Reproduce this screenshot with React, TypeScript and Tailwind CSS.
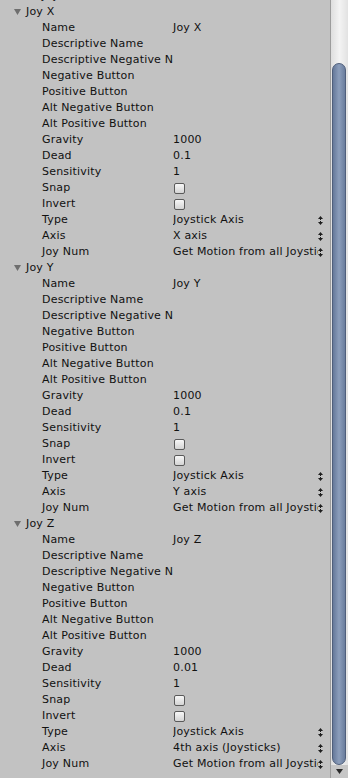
import React from "react"

type Field =
    | { label: string; kind: "text"; value?: string }
    | { label: string; kind: "check" }
    | { label: string; kind: "select"; value: string }

const axisFields = (name: string, dead: string, axis: string): Field[] => [
    { label: "Name", kind: "text", value: name },
    { label: "Descriptive Name", kind: "text" },
    { label: "Descriptive Negative N", kind: "text" },
    { label: "Negative Button", kind: "text" },
    { label: "Positive Button", kind: "text" },
    { label: "Alt Negative Button", kind: "text" },
    { label: "Alt Positive Button", kind: "text" },
    { label: "Gravity", kind: "text", value: "1000" },
    { label: "Dead", kind: "text", value: dead },
    { label: "Sensitivity", kind: "text", value: "1" },
    { label: "Snap", kind: "check" },
    { label: "Invert", kind: "check" },
    { label: "Type", kind: "select", value: "Joystick Axis" },
    { label: "Axis", kind: "select", value: axis },
    { label: "Joy Num", kind: "select", value: "Get Motion from all Joysticks" },
]

const axes = [
    { name: "Joy X", dead: "0.1", axis: "X axis" },
    { name: "Joy Y", dead: "0.1", axis: "Y axis" },
    { name: "Joy Z", dead: "0.01", axis: "4th axis (Joysticks)" },
]

const SelectArrows = () => (
    <svg width="5" height="9" viewBox="0 0 5 9" className="shrink-0">
        <path d="M2.5 0 L5 3 L0 3 Z" fill="#1e1e1e" />
        <rect x="2" y="3" width="1" height="1" fill="#1e1e1e" />
        <rect x="2" y="5" width="1" height="1" fill="#1e1e1e" />
        <path d="M0 6 L5 6 L2.5 9 Z" fill="#1e1e1e" />
    </svg>
)

const Checkbox = () => (
    <div className="ml-px h-[11px] w-[11px] rounded-[2px] border border-[#5a5a5a] bg-gradient-to-b from-[#f7f7f7] to-[#d4d4d4]" />
)

const Row = ({ field }: { field: Field }) => (
    <div className="flex h-4 items-center">
        <div className="w-[173px] shrink-0 whitespace-nowrap overflow-hidden pl-[42px]">{field.label}</div>
        {field.kind === "text" && <div className="whitespace-nowrap">{field.value}</div>}
        {field.kind === "check" && <Checkbox />}
        {field.kind === "select" && (
            <div className="flex w-[151px] items-center">
                <div className="w-[145px] overflow-hidden whitespace-nowrap">{field.value}</div>
                <div className="flex w-[6px] justify-start">
                    <SelectArrows />
                </div>
            </div>
        )}
    </div>
)

const Group = ({ name, dead, axis }: { name: string; dead: string; axis: string }) => (
    <div>
        <div className="flex h-4 items-center">
            <svg width="7" height="6" viewBox="0 0 7 6" className="ml-[14px] mr-[5px]">
                <path d="M0 0 L7 0 L3.5 6 Z" fill="#6e6e6e" />
            </svg>
            <span>{name}</span>
        </div>
        {axisFields(name, dead, axis).map(f => (
            <Row key={f.label} field={f} />
        ))}
    </div>
)

const Scrollbar = () => (
    <div className="flex w-[18px] shrink-0 flex-col border-l border-[#9c9c9c] bg-gradient-to-r from-[#dedede] via-[#f3f3f3] to-[#e2e2e2]">
        <div className="h-[63px] shrink-0" />
        <div className="mx-px w-[14px] flex-1 rounded-full border border-[#4f5f7b] bg-gradient-to-r from-[#66799a] via-[#8c9ebb] to-[#6a7d9d]" />
        <div className="flex h-[13px] shrink-0 items-center justify-center bg-[#c6c6c6]">
            <svg width="7" height="5" viewBox="0 0 7 5">
                <path d="M0 0 L7 0 L3.5 5 Z" fill="#2a2a2a" />
            </svg>
        </div>
    </div>
)

const App = () => {
    return (
        <div className="flex h-[778px] w-[348px] overflow-hidden bg-[#c2c2c2] font-['DejaVu_Sans',sans-serif] text-[11px] tracking-[0.2px] text-[#111]">
            <div className="flex-1 overflow-hidden">
                <div className="-mt-[12px]">
                    {/* tail of the previous axis, scrolled mostly out of view */}
                    <Row field={{ label: "Joy Num", kind: "text" }} />
                    {axes.map(a => (
                        <Group key={a.name} {...a} />
                    ))}
                </div>
            </div>
            <Scrollbar />
        </div>
    )
}

export default App
